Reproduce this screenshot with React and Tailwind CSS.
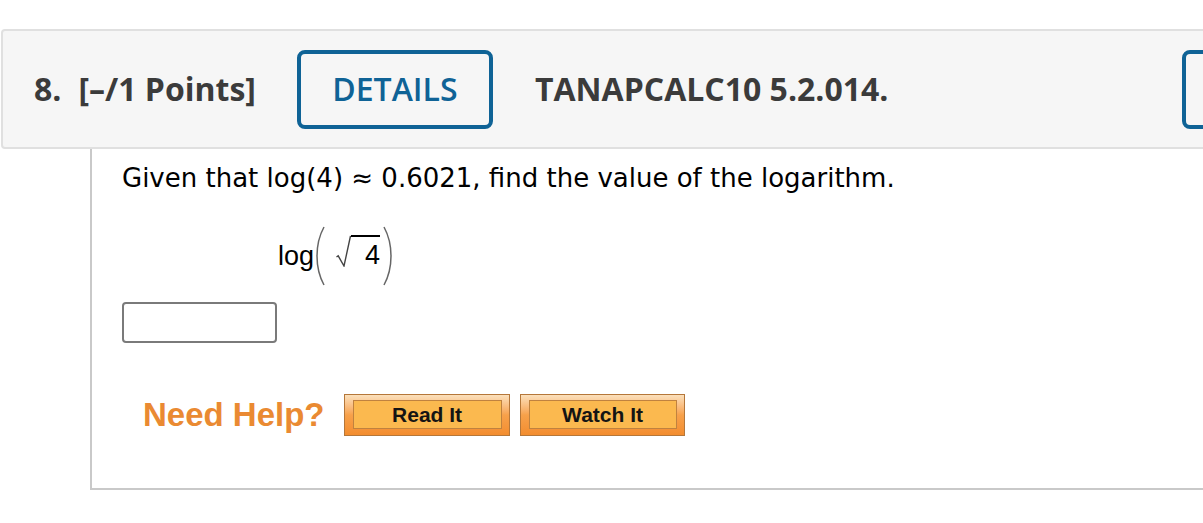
import React from "react";

const openSans = { fontFamily: '"Open Sans", "DejaVu Sans", sans-serif' };
const verdana = { fontFamily: '"DejaVu Sans", Verdana, sans-serif' };
const arial = { fontFamily: '"Liberation Sans", Arial, sans-serif' };

function Paren({ flip }) {
  return (
    <svg width="10" height="60" viewBox="0 0 10 60" className="shrink-0">
      <path
        d={flip ? "M2 1 C8 12 9 20 9 30 C9 40 8 48 2 59" : "M8 1 C2 12 1 20 1 30 C1 40 2 48 8 59"}
        fill="none"
        stroke="#666"
        strokeWidth="1.5"
      />
    </svg>
  );
}

function HelpButton({ label, width }) {
  return (
    <button
      className="flex h-[42px] items-stretch border border-[#b5773a] bg-gradient-to-b from-[#fbe0bb] via-[#f7a14a] to-[#f38d2f] pb-[6px] pl-[8px] pr-[7px] pt-[5px]"
      style={{ width }}
    >
      <span
        className="flex flex-1 items-center justify-center border border-[#c0823f] bg-[#fbb94f] text-[21px] font-bold leading-none text-[#141414]"
        style={arial}
      >
        {label}
      </span>
    </button>
  );
}

export default function App() {
  return (
    <div className="h-[523px] w-[1203px] overflow-hidden bg-white pt-[29px]">
      {/* question header */}
      <div
        className="ml-px flex h-[120px] w-[1240px] items-center rounded-[4px] border-2 border-[#e0e0e0] bg-[#f6f6f6] pl-[31px] text-[#3b3b3b]"
        style={openSans}
      >
        <span className="text-[32px] font-bold">8.</span>
        <span className="ml-[17px] text-[32px] font-bold">[–/1 Points]</span>
        <div className="ml-[41px] flex h-[79px] w-[196px] items-center justify-center rounded-[8px] border-4 border-[#0f6396] text-[32px] font-semibold text-[#0f6396]">
          DETAILS
        </div>
        <span className="ml-[42px] text-[32px] font-bold">TANAPCALC10 5.2.014.</span>
        <div className="ml-auto h-[79px] w-[57px] rounded-[8px] border-4 border-[#0f6396]" />
      </div>

      {/* question body */}
      <div className="ml-[90px] h-[341px] w-[1200px] border-b-2 border-l-2 border-[#c9c9c9] pl-[30px] pt-[14px]">
        <p className="text-[26px] leading-[30px] text-black" style={verdana}>
          Given that log(4) ≈ 0.6021, find the value of the logarithm.
        </p>

        <div className="ml-[156px] mt-[33px] flex h-[60px] items-center text-black" style={arial}>
          <span className="mr-[2px] text-[27px] leading-none">log</span>
          <Paren />
          <span className="ml-[10px] mt-[9px] flex self-start items-start">
            <svg width="15" height="32" viewBox="0 0 15 32" className="shrink-0">
              <path d="M0.5 22 L2.2 20.8 L8 31 L14.5 1" fill="none" stroke="#444" strokeWidth="1.4" />
            </svg>
            <span className="border-t-2 border-black pl-[14px] pt-[5px] text-[27px] leading-none">4</span>
          </span>
          <span className="ml-[2px]">
            <Paren flip />
          </span>
        </div>

        <input
          type="text"
          className="mt-[16px] block h-[41px] w-[155px] rounded-[4px] border-2 border-[#7a7a7a] bg-white"
        />

        <div className="mt-[47px] flex items-center">
          <span className="ml-[21px] text-[33px] font-bold text-[#ea8a32]" style={arial}>
            Need Help?
          </span>
          <div className="ml-[19px] flex gap-[10px]">
            <HelpButton label="Read It" width={166} />
            <HelpButton label="Watch It" width={165} />
          </div>
        </div>
      </div>
    </div>
  );
}
